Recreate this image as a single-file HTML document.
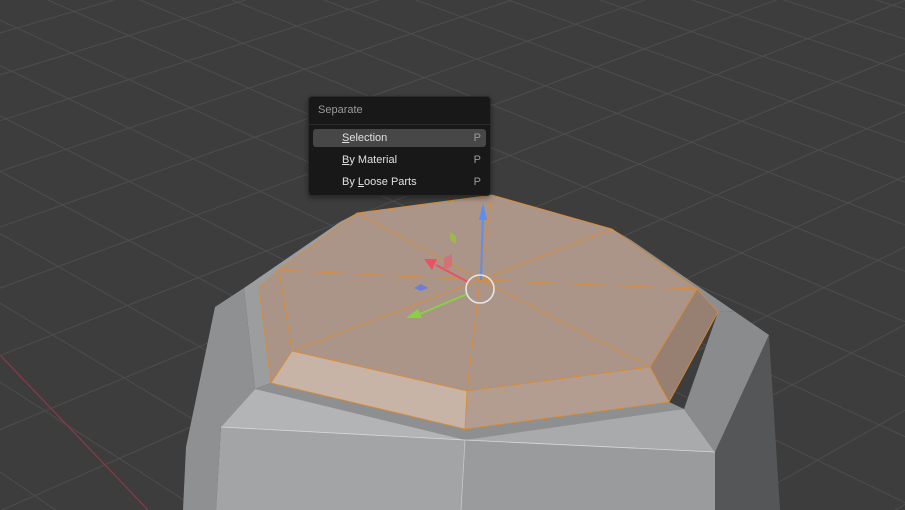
<!DOCTYPE html>
<html><head><meta charset="utf-8"><style>
html,body{margin:0;padding:0;width:905px;height:510px;overflow:hidden;background:#3d3d3d;font-family:"Liberation Sans",sans-serif}
svg{position:absolute;left:0;top:0;overflow:hidden}
.menu{position:absolute;left:308px;top:96px;width:181px;height:98px;background:#181818;border:1px solid #2a2a2a;border-radius:4px;box-shadow:0 2px 6px rgba(0,0,0,.4)}
.menu .t{position:absolute;left:9px;top:7px;font-size:11px;color:#9a9a9a}
.menu .sep{position:absolute;left:0;right:0;top:27px;height:1px;background:#2c2c2c}
.item{position:absolute;left:4px;width:173px;height:18px;font-size:11px;color:#e0e0e0;border-radius:3px}
.item span{position:absolute;left:29px;top:3px}
.item b{position:absolute;right:5px;top:3px;font-weight:normal;color:#9a9a9a}
.item.h{background:#474747}
u{text-decoration:underline}
</style></head><body>
<svg width="905" height="510" viewBox="0 0 905 510">
<g id="grid" stroke="#4d4d4d" stroke-width="1"></g>
<line x1="0" y1="355" x2="148" y2="510" stroke="#8a3a44" stroke-width="1.2"/>
<polygon points="215,307 244,288 255,389 221,427 216,510 183,510 186,447" fill="#8f9091"/>
<polygon points="221,427 465,440 461,510 216,510" fill="#a3a4a5"/>
<polygon points="465,440 715,452 715,510 461,510" fill="#9a9b9c"/>
<polygon points="715,452 769,335 780,510 715,510" fill="#555657"/>
<polygon points="221,427 255,389 465,430 465,440" fill="#b3b4b5"/>
<polygon points="465,440 465,430 684,409 715,452" fill="#a9aaab"/>
<polygon points="684,409 718,312 734,311 769,335 715,452" fill="#8a8b8c"/>
<polygon points="244,288 340,222 357,213 279,270 259,288 271,383 255,389" fill="#9c9d9e"/>
<polygon points="255,389 271,383 465,429 465,440" fill="#8e8f90"/>
<polygon points="465,429 669,402 684,409 465,440" fill="#8e8f90"/>
<polygon points="612,229 631,240 734,311 718,312 697,289" fill="#8d8e8f"/>
<polyline points="221,427 465,440 715,452" fill="none" stroke="#d8d8d8" stroke-width="0.8"/>
<line x1="465" y1="440" x2="461" y2="510" stroke="#c8c8c8" stroke-width="0.8"/>
<polygon points="259,288 279,270 292,351 271,383" fill="#a99487"/>
<polygon points="271,383 292,351 467,391 465,429" fill="#c8b3a7"/>
<polygon points="465,429 467,391 650,367 669,402" fill="#b29d90"/>
<polygon points="669,402 650,367 697,289 718,312" fill="#977f72"/>
<polygon points="357,213 492,195 612,229 697,289 650,367 467,391 292,351 279,270" fill="#ab9588"/>
<g stroke="#e08a2a" stroke-width="0.8" fill="none">
<polygon points="357,213 492,195 612,229 697,289 650,367 467,391 292,351 279,270"/>
<polyline points="279,270 259,288 271,383 465,429 669,402 718,312 697,289"/>
<line x1="292" y1="351" x2="271" y2="383"/><line x1="467" y1="391" x2="465" y2="429"/><line x1="650" y1="367" x2="669" y2="402"/>
<line x1="480" y1="280" x2="357" y2="213"/><line x1="480" y1="280" x2="492" y2="195"/><line x1="480" y1="280" x2="612" y2="229"/><line x1="480" y1="280" x2="697" y2="289"/><line x1="480" y1="280" x2="650" y2="367"/><line x1="480" y1="280" x2="467" y2="391"/><line x1="480" y1="280" x2="292" y2="351"/><line x1="480" y1="280" x2="279" y2="270"/>
</g>
<line x1="481" y1="280" x2="483" y2="214" stroke="#5b8ef0" stroke-width="2"/>
<polygon points="483,203 479,220 487,220" fill="#5b8ef0"/>
<line x1="468" y1="282" x2="436" y2="265" stroke="#ee5060" stroke-width="2"/>
<polygon points="424,259 437,259 432,270" fill="#ee5060"/>
<polygon points="444,258 452,254 452,266 444,270" fill="#d86a72" opacity=".8"/>
<line x1="467" y1="294" x2="420" y2="314" stroke="#8ad040" stroke-width="2"/>
<polygon points="406,318 418,309 422,318" fill="#8ad040"/>
<polygon points="450,232 456,236 456,244 450,240" fill="#9cc040" opacity=".8"/>
<polygon points="414,288 421,284 428,288 421,291" fill="#6c7ed8"/>
<circle cx="480" cy="289" r="14" fill="none" stroke="#e6e6e6" stroke-width="1.6"/>
</svg>
<div class="menu">
<div class="t">Separate</div><div class="sep"></div>
<div class="item h" style="top:32px"><span><u>S</u>election</span><b>P</b></div>
<div class="item" style="top:54px"><span><u>B</u>y Material</span><b>P</b></div>
<div class="item" style="top:76px"><span>By <u>L</u>oose Parts</span><b>P</b></div>
</div>
<script>
var g=document.getElementById('grid'),s='';
function L(vx,vy,px,py){var ex=vx+4*(px-vx),ey=vy+4*(py-vy);s+='<line x1="'+vx+'" y1="'+vy+'" x2="'+ex+'" y2="'+ey+'"/>';}
var y=-5,d=38;for(var i=0;i<22;i++){L(3200,-900,0,y);y+=d;d*=1.1;}
for(var x=-1700;x<1000;x+=92){L(-2000,-900,x,0);}
g.innerHTML=s;
</script>
</body></html>
